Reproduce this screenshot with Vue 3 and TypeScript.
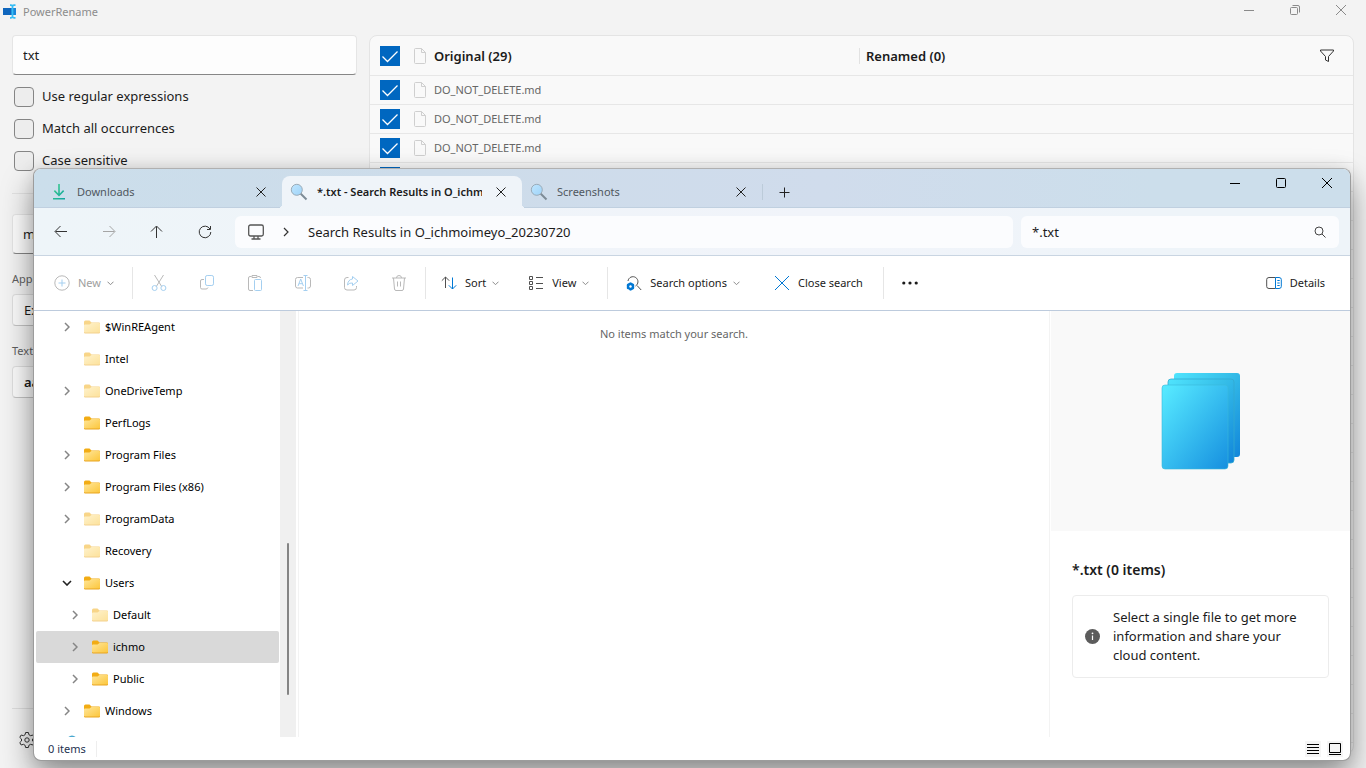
<script setup lang="ts">
import { ref } from 'vue'

interface TreeNode {
  name: string
  level: number
  state: 'closed' | 'open' | 'leaf'
  faded?: boolean
  selected?: boolean
}

const pattern = ref('txt')
const replacement = ref('md')
const query = ref('*.txt')

const options = [
  { id: 'opt-regex', label: 'Use regular expressions' },
  { id: 'opt-all', label: 'Match all occurrences' },
  { id: 'opt-case', label: 'Case sensitive' },
]

const files: string[] = Array.from({ length: 23 }, () => 'DO_NOT_DELETE.md')

const tree: TreeNode[] = [
  { name: '$WinREAgent', level: 0, state: 'closed', faded: true },
  { name: 'Intel', level: 0, state: 'leaf', faded: true },
  { name: 'OneDriveTemp', level: 0, state: 'closed', faded: true },
  { name: 'PerfLogs', level: 0, state: 'leaf' },
  { name: 'Program Files', level: 0, state: 'closed' },
  { name: 'Program Files (x86)', level: 0, state: 'closed' },
  { name: 'ProgramData', level: 0, state: 'closed', faded: true },
  { name: 'Recovery', level: 0, state: 'leaf', faded: true },
  { name: 'Users', level: 0, state: 'open' },
  { name: 'Default', level: 1, state: 'closed', faded: true },
  { name: 'ichmo', level: 1, state: 'closed', selected: true },
  { name: 'Public', level: 1, state: 'closed' },
  { name: 'Windows', level: 0, state: 'closed' },
]
</script>

<template>
  <div class="desktop">
    <svg class="defs" width="0" height="0" aria-hidden="true">
      <defs>
        <linearGradient id="g-folder" x1="0" y1="0" x2="1" y2="1">
          <stop offset="0" stop-color="#ffe69a" /><stop offset="1" stop-color="#fcc63a" />
        </linearGradient>
        <linearGradient id="g-lens" x1="0" y1="0" x2="1" y2="1">
          <stop offset="0" stop-color="#bfe6ff" /><stop offset="1" stop-color="#9fd3f8" />
        </linearGradient>
        <linearGradient id="g-down" x1="0" y1="0" x2="1" y2="1">
          <stop offset="0" stop-color="#3fd08a" /><stop offset="1" stop-color="#0fa3a0" />
        </linearGradient>
        <linearGradient id="g-page" x1="0" y1="0" x2="1" y2="1">
          <stop offset="0.05" stop-color="#55e8ff" /><stop offset="1" stop-color="#168fdf" />
        </linearGradient>
        <linearGradient id="g-back" x1="0" y1="0" x2="1" y2="1">
          <stop offset="0" stop-color="#50e4fd" /><stop offset="0.45" stop-color="#35bde8" /><stop offset="1" stop-color="#1186da" />
        </linearGradient>
      </defs>
    </svg>

    <main class="rename">
      <header class="r-title">
        <svg width="14" height="16" viewBox="0 0 14 16"><path d="M0 4h13v7H0z" fill="#1a86d8" /><path d="M0 4h8v7H0z" fill="#0f66bd" /><path d="M7 1.200h1q1.500 0 1.500 1.500v9.600q0 1.500-1.500 1.500H7M12.500 1.200h-1.500q-1.500 0-1.500 1.500M12.500 13.800h-1.500q-1.500 0-1.500-1.500" fill="none" stroke="#35bdf5" stroke-width="1.700" /></svg>
        <span>PowerRename</span>
        <div class="r-controls">
          <button aria-label="Minimize"><svg width="12" height="12" viewBox="0 0 12 12"><path d="M1 6.500h10" /></svg></button>
          <button aria-label="Restore"><svg width="12" height="12" viewBox="0 0 12 12"><rect x="1.500" y="3.500" width="7" height="7" rx="1" /><path d="M3.500 1.500H9A1.500 1.500 0 0 1 10.500 3v5.500" /></svg></button>
          <button aria-label="Close"><svg width="12" height="12" viewBox="0 0 12 12"><path d="M1 1l10 10M11 1L1 11" /></svg></button>
        </div>
      </header>

      <div class="r-body">
        <section class="side">
          <input v-model="pattern" class="field" type="text" aria-label="Search for" />
          <div class="checks">
            <label v-for="o in options" :key="o.id" :for="o.id"><input :id="o.id" type="checkbox" class="box" />{{ o.label }}</label>
          </div>
          <hr />
          <input v-model="replacement" class="field second" type="text" aria-label="Replace with" />
          <label class="caption" for="apply">Apply to</label>
          <select id="apply" class="pick"><option>Extension only</option></select>
          <span class="caption">Text formatting</span>
          <button class="pick format">aa</button>
          <div class="side-foot">
            <button aria-label="Settings"><svg width="18" height="18" viewBox="0 0 18 18"><circle cx="9" cy="9" r="2.200" /><path d="M7.600 1.500h2.800l.5 2.200 1.700 1 2.200-.7 1.400 2.400-1.700 1.600v2l1.700 1.600-1.400 2.400-2.200-.7-1.700 1-.5 2.200H7.600l-.5-2.200-1.700-1-2.200.7-1.400-2.400L3.500 10V8L1.800 6.400 3.200 4l2.200.7 1.700-1z" stroke-linejoin="round" /></svg></button>
          </div>
        </section>

        <section class="list">
          <table>
            <colgroup><col class="c-check" /><col class="c-icon" /><col class="c-orig" /><col /><col class="c-filter" /></colgroup>
            <thead>
              <tr>
                <th><input type="checkbox" class="tick" checked aria-label="Select all" /></th>
                <th><svg class="doc" width="12" height="16" viewBox="0 0 12 16"><path d="M.5 1.500q0-1 1-1h6l4 4v10q0 1-1 1h-9q-1 0-1-1zM7.500.5v4h4" /></svg></th>
                <th>Original (29)</th>
                <th><span class="split">Renamed (0)</span></th>
                <th><button aria-label="Filter"><svg width="16" height="16" viewBox="0 0 16 16"><path d="M1.500 2h13v1L9.500 8.500v5l-3-1.500V8.500L1.500 3z" stroke-linejoin="round" /></svg></button></th>
              </tr>
            </thead>
            <tbody>
              <tr v-for="(f, i) in files" :key="i">
                <td><input type="checkbox" class="tick" checked :aria-label="f" /></td>
                <td><svg class="doc" width="12" height="16" viewBox="0 0 12 16"><path d="M.5 1.500q0-1 1-1h6l4 4v10q0 1-1 1h-9q-1 0-1-1zM7.500.5v4h4" /></svg></td>
                <td>{{ f }}</td>
                <td></td>
                <td></td>
              </tr>
            </tbody>
          </table>
        </section>
      </div>
    </main>

    <section class="explorer">
      <header class="tabs">
        <div class="tab">
          <svg width="16" height="18" viewBox="0 0 16 18"><path d="M7.200 1h1.600v9.400l3.300-3.300 1.100 1.100L8 13.400 2.800 8.200l1.100-1.100 3.300 3.300zM2 15h12v1.600H2z" fill="url(#g-down)" /></svg>
          <span class="t-name">Downloads</span>
          <button aria-label="Close tab"><svg width="10" height="10" viewBox="0 0 10 10"><path d="M.5.5l9 9M9.500.5l-9 9" /></svg></button>
        </div>
        <div class="tab active">
          <svg width="18" height="18" viewBox="0 0 18 18"><path d="M10.500 10.500l6 6" stroke="#7d8b96" stroke-width="2" /><circle cx="6.800" cy="6.800" r="5.500" fill="url(#g-lens)" stroke="#9aabb8" /></svg>
          <span class="t-name">*.txt - Search Results in O_ichmoimeyo</span>
          <button aria-label="Close tab"><svg width="10" height="10" viewBox="0 0 10 10"><path d="M.5.5l9 9M9.500.5l-9 9" /></svg></button>
        </div>
        <div class="tab">
          <svg width="18" height="18" viewBox="0 0 18 18"><path d="M10.500 10.500l6 6" stroke="#7d8b96" stroke-width="2" /><circle cx="6.800" cy="6.800" r="5.500" fill="url(#g-lens)" stroke="#9aabb8" /></svg>
          <span class="t-name">Screenshots</span>
          <button aria-label="Close tab"><svg width="10" height="10" viewBox="0 0 10 10"><path d="M.5.5l9 9M9.500.5l-9 9" /></svg></button>
        </div>
        <button class="plus" aria-label="New tab"><svg width="11" height="11" viewBox="0 0 11 11"><path d="M5.500.5v10M.5 5.500h10" /></svg></button>
        <div class="w-controls">
          <button aria-label="Minimize"><svg width="12" height="12" viewBox="0 0 12 12"><path d="M1 6.500h10" /></svg></button>
          <button aria-label="Maximize"><svg width="12" height="12" viewBox="0 0 12 12"><rect x="1.500" y="1.500" width="9" height="9" rx="1" /></svg></button>
          <button aria-label="Close"><svg width="12" height="12" viewBox="0 0 12 12"><path d="M1 1l10 10M11 1L1 11" /></svg></button>
        </div>
      </header>

      <nav class="nav">
        <button aria-label="Back"><svg width="14" height="14" viewBox="0 0 14 14"><path d="M13 6.500H1.500M6.500 1L1 6.500 6.500 12" /></svg></button>
        <button class="off" aria-label="Forward"><svg width="14" height="14" viewBox="0 0 14 14"><path d="M1 6.500h11.500M7.500 1L13 6.500 7.500 12" /></svg></button>
        <button aria-label="Up"><svg width="14" height="14" viewBox="0 0 14 14"><path d="M6.500 13V1.500M1 6.500L6.500 1 12 6.500" /></svg></button>
        <button aria-label="Refresh"><svg width="14" height="14" viewBox="0 0 14 14"><path d="M12 4A5.800 5.800 0 1 0 12.800 7M12.500 1v3.500H9" /></svg></button>
        <div class="address">
          <svg width="16" height="16" viewBox="0 0 16 16" class="pc"><rect x=".7" y="1" width="14.600" height="11" rx="1.800" /><path d="M6 12v2.500M10 12v2.500M3.500 15h9" /></svg>
          <svg width="6" height="10" viewBox="0 0 6 10" class="sep-chev"><path d="M1 1l4 4-4 4" /></svg>
          <span>Search Results in O_ichmoimeyo_20230720</span>
        </div>
        <div class="search">
          <input v-model="query" type="text" aria-label="Search" />
          <svg width="12" height="12" viewBox="0 0 12 12"><circle cx="5" cy="5" r="4" /><path d="M8 8l3.500 3.500" /></svg>
        </div>
      </nav>

      <div class="tools">
        <button class="cmd new off"><svg width="16" height="16" viewBox="0 0 16 16"><circle cx="8" cy="8" r="7.200" class="k" /><path d="M8 4.500v7M4.500 8h7" class="b" /></svg><span>New</span><svg class="chev" width="7" height="5" viewBox="0 0 7 5"><path d="M.5.7l3 3 3-3" /></svg></button>
        <i class="bar"></i>
        <button class="ico off" aria-label="Cut"><svg width="16" height="18" viewBox="0 0 16 18"><path d="M3.500 1l7.200 11.500M12.500 1L5.300 12.500" class="k" /><circle cx="3.600" cy="14" r="2.500" class="b" /><circle cx="12.400" cy="14" r="2.500" class="b" /></svg></button>
        <button class="ico off" aria-label="Copy"><svg width="16" height="18" viewBox="0 0 16 18"><path d="M5 5.500H3q-1.500 0-1.500 1.500v6.500Q1.500 15 3 15h4q1.500 0 2-1.500" class="k" /><rect x="6.500" y="1.500" width="8" height="10" rx="1.700" class="b" /></svg></button>
        <button class="ico off" aria-label="Paste"><svg width="16" height="18" viewBox="0 0 16 18"><path d="M4.500 2.500H3Q1.500 2.500 1.500 4V15q0 1.500 1.500 1.500h3M10.500 2.500H12q1.500 0 1.500 1.500M5 1.500h5v2H5z" class="k" /><rect x="7.500" y="5.500" width="7" height="11" rx="1" class="b" /></svg></button>
        <button class="ico off" aria-label="Rename"><svg width="18" height="18" viewBox="0 0 18 18"><path d="M9 3.500H3.500Q1.500 3.500 1.500 5.500v6.500q0 2 2 2H9M13.500 3.500h1q2 0 2 2v6.500q0 2-2 2h-1" class="k" /><path d="M4 12l2.700-7 2.700 7M5 9.700h3.500M9.500 1.500h4M9.500 16.500h4M11.500 1.500v15" class="b" /></svg></button>
        <button class="ico off" aria-label="Share"><svg width="16" height="18" viewBox="0 0 16 18"><path d="M5.500 3.500H4Q1.500 3.500 1.500 6v7.500Q1.500 16 4 16h7q2.500 0 2.500-2.500V12" class="k" /><path d="M9.500 2.500l5.500 4.500-5.500 4.500V9Q6.500 8.500 4.500 11q.5-5.500 5-6z" class="b" stroke-linejoin="round" /></svg></button>
        <button class="ico off" aria-label="Delete"><svg width="16" height="18" viewBox="0 0 16 18"><path d="M1 4h14M5.500 4q0-2.500 2.500-2.500T10.500 4M2.500 4l1 11q.2 1.500 1.500 1.500h6q1.300 0 1.500-1.500l1-11M6.500 7.500v5M9.500 7.500v5" class="k" /></svg></button>
        <i class="bar"></i>
        <button class="cmd"><svg width="16" height="16" viewBox="0 0 16 16"><path d="M4.500 13V2M.8 5.700L4.500 2l3.700 3.700" class="k" /><path d="M11.500 2.500V14M7.800 10.300l3.700 3.700 3.700-3.700" class="b" /></svg><span>Sort</span><svg class="chev" width="7" height="5" viewBox="0 0 7 5"><path d="M.5.7l3 3 3-3" /></svg></button>
        <button class="cmd"><svg width="16" height="16" viewBox="0 0 16 16"><path d="M1.500 1.500h3v3h-3zM1.500 6.500h3v3h-3zM1.500 11.500h3v3h-3zM8 2.500h7M8 8.500h7M8 13.500h7" class="k" /></svg><span>View</span><svg class="chev" width="7" height="5" viewBox="0 0 7 5"><path d="M.5.7l3 3 3-3" /></svg></button>
        <i class="bar"></i>
        <button class="cmd wide"><svg width="16" height="16" viewBox="0 0 16 16"><path d="M2 6a5 5 0 1 1 7.500 5M11 10.500l4.200 4.500" class="k" /><circle cx="4.500" cy="11.500" r="2.500" fill="none" stroke="#0078d4" stroke-width="2.400" /><path d="M4.500 7.500v8M1 9.500l7 4M8 9.500l-7 4" stroke="#0078d4" stroke-width="1.800" /><circle cx="4.500" cy="11.500" r="1.200" fill="#fff" stroke="none" /></svg><span>Search options</span><svg class="chev" width="7" height="5" viewBox="0 0 7 5"><path d="M.5.7l3 3 3-3" /></svg></button>
        <button class="cmd wide"><svg width="16" height="16" viewBox="0 0 16 16"><path d="M1 1l14 14M15 1L1 15" class="b" /></svg><span>Close search</span></button>
        <i class="bar"></i>
        <button class="ico" aria-label="More"><svg width="16" height="4" viewBox="0 0 16 4"><g fill="#1b1b1b" stroke="none"><circle cx="1.800" cy="2" r="1.600" /><circle cx="8" cy="2" r="1.600" /><circle cx="14.200" cy="2" r="1.600" /></g></svg></button>
        <button class="cmd details-btn"><svg width="16" height="14" viewBox="0 0 16 14"><path d="M9.500 1.500H3Q.7 1.500.7 3.500v7Q.7 12.500 3 12.500h6.500" class="k" /><path d="M9.500 1.500H13q2.300 0 2.300 2v7q0 2-2.300 2H9.500zM11.300 4.500h2.400M11.300 7h2.400M11.300 9.500h2.400" class="b" /></svg><span>Details</span></button>
      </div>

      <div class="work">
        <div class="tree">
          <button v-for="n in tree" :key="n.name" class="node" :class="{ child: n.level === 1, selected: n.selected }">
            <span class="arrow">
              <svg v-if="n.state === 'closed'" width="6" height="10" viewBox="0 0 6 10"><path d="M1 1l4 4-4 4" stroke="#858585" stroke-width="1.500" /></svg>
              <svg v-else-if="n.state === 'open'" width="10" height="6" viewBox="0 0 10 6"><path d="M1 1l4 4 4-4" stroke="#222" stroke-width="1.600" /></svg>
            </span>
            <svg class="folder" :class="{ faded: n.faded }" width="16" height="14" viewBox="0 0 16 14"><path d="M0 2Q0 .5 1.500.5h4L7.500 2.500H15q1 0 1 1V8H0z" fill="#f2ac14" /><path d="M0 5.500q0-1 1-1h4.500l2-1.500H15q1 0 1 1v8q0 1-1 1H1q-1 0-1-1z" fill="url(#g-folder)" /><path d="M0 12q0 1 1 1h14q1 0 1-1" fill="none" stroke="#e9a521" /></svg>
            <span>{{ n.name }}</span>
          </button>
          <div class="node peek"><svg width="14" height="16" viewBox="0 0 14 16"><ellipse cx="7" cy="8" rx="6" ry="7.500" fill="#4aa8d0" /></svg></div>
        </div>
        <div class="scroll"><div class="thumb"></div></div>
        <div class="results">No items match your search.</div>
        <aside class="details">
          <div class="preview">
            <svg width="80" height="98" viewBox="0 0 80 98">
              <rect x="13" y="1" width="66" height="84" rx="3" fill="url(#g-back)" />
              <rect x="7" y="7" width="66" height="84" rx="3" fill="url(#g-back)" stroke="#32a9d1" stroke-width=".8" />
              <rect x="1" y="13" width="66" height="84" rx="3" fill="url(#g-page)" stroke="#3bbada" stroke-width=".6" />
            </svg>
          </div>
          <h2>*.txt (0 items)</h2>
          <div class="tip">
            <svg width="15" height="15" viewBox="0 0 15 15"><circle cx="7.500" cy="7.500" r="7.500" fill="#5c5c5c" /><path d="M7.500 6.500v4.500" stroke="#fff" stroke-width="1.200" /><circle cx="7.500" cy="4.300" r=".9" fill="#fff" /></svg>
            <p>Select a single file to get more information and share your cloud content.</p>
          </div>
        </aside>
      </div>

      <footer class="status">
        <span class="count">0 items</span>
        <button aria-label="Details view"><svg width="12" height="12" viewBox="0 0 12 12"><path d="M0 1.500h12M0 4.500h12M0 7.500h12M0 10.500h12" /></svg></button>
        <button aria-label="Large icons view"><svg width="12" height="12" viewBox="0 0 12 12"><path d="M.5.5h11v9H.5zM0 11.500h12" /></svg></button>
      </footer>
    </section>
  </div>
</template>

<style>
html, body { margin: 0; overflow: hidden; }
</style>

<style scoped>
* { box-sizing: border-box; }
.desktop {
  position: relative;
  height: 100vh;
  overflow: hidden;
  background: #f3f3f3;
  color: #1b1b1b;
  font: 11px/16px "Noto Sans", "Open Sans", sans-serif;
}
.defs { position: absolute; }
button {
  display: flex;
  align-items: center;
  justify-content: center;
  padding: 0;
  border: 0;
  background: none;
  color: inherit;
  font: inherit;
}
svg { display: block; flex: none; fill: none; stroke-width: 1; }
button svg { stroke: #333; }

/* rename window */
.rename { display: flex; flex-direction: column; height: 100%; }
.r-title { display: flex; align-items: center; height: 35px; padding: 0 2px 11px 3px; gap: 6px; color: #8c8c8c; }
.r-controls { display: flex; margin-left: auto; margin-bottom: 4px; }
.r-controls button { width: 46px; height: 20px; }
.r-controls svg { stroke: #8a8a8a; }
.r-body { display: flex; flex: 1; min-height: 0; gap: 12px; padding: 0 12px 14px; }
.side { display: flex; flex-direction: column; width: 345px; }
.field {
  height: 40px;
  padding: 0 10px;
  border: 1px solid #e5e5e5;
  border-bottom-color: #868686;
  border-radius: 4px;
  background: #fdfdfd;
  color: inherit;
  font: inherit;
  font-size: 13px;
}
.checks { display: flex; flex-direction: column; padding: 5px 2px 17px; }
.checks label { display: flex; align-items: center; height: 32px; gap: 8px; font-size: 13px; }
.box { appearance: none; width: 20px; height: 20px; margin: 2px 0 0; border: 1px solid #858585; border-radius: 4px; background: #ededed; }
hr { width: 100%; height: 1px; margin: 0 0 20px; border: 0; background: #e2e2e2; }
.caption { margin: 17px 0 7px; color: #5f5f5f; }
.pick {
  appearance: none;
  height: 32px;
  padding: 0 11px;
  border: 1px solid #dedede;
  border-bottom-color: #c4c4c4;
  border-radius: 4px;
  background: #fbfbfb;
  color: inherit;
  font: inherit;
  font-size: 13px;
  justify-content: flex-start;
}
.format { font-weight: 600; }
.side-foot { margin-top: auto; padding: 22px 6px 5px; border-top: 1px solid #dedede; }
.list { flex: 1; min-width: 0; overflow: hidden; border: 1px solid #e4e4e4; border-radius: 8px; background: #f9f9f9; }
table { width: 100%; border-collapse: collapse; table-layout: fixed; }
.c-check { width: 44px; }
.c-icon { width: 20px; }
.c-orig { width: 425px; }
.c-filter { width: 50px; }
th, td { height: 29px; padding: 0; border-bottom: 1px solid #e7e7e7; color: #666; text-align: left; }
th { height: 39px; padding-top: 2px; color: #1b1b1b; font-size: 13px; font-weight: 600; }
th:first-child, td:first-child { padding-left: 10px; }
.split { display: block; padding-left: 6px; border-left: 1px solid #e2e2e2; }
.doc { stroke: #cfcfcf; }
th button { width: 16px; margin-left: 16px; }
.tick {
  display: block;
  appearance: none;
  width: 20px;
  height: 20px;
  margin: 0;
  background: #0067c0 url("data:image/svg+xml,%3Csvg xmlns='http://www.w3.org/2000/svg' viewBox='0 0 20 20'%3E%3Cpath d='M2.500 10.500l5 5 10-10' fill='none' stroke='white' stroke-width='1.300'/%3E%3C/svg%3E");
}

/* explorer window */
.explorer {
  position: absolute;
  inset: 168px 15px 7px 33px;
  display: flex;
  flex-direction: column;
  overflow: hidden;
  border: 1px solid #9c9c9c;
  border-top-color: #b0b0b0;
  border-radius: 8px;
  background: #fff;
  background-clip: padding-box;
  box-shadow: 0 16px 32px rgba(0, 0, 0, 0.4), 0 0 16px rgba(0, 0, 0, 0.1);
}
.tabs {
  display: flex;
  align-items: flex-end;
  height: 39px;
  background: linear-gradient(90deg, #cbdeeb 0%, #cddcea 30%, #d0dcec 60%, #ccdeeb 85%);
  box-shadow: inset 0 -1px #c0d0e0;
}
.tab { position: relative; display: flex; align-items: center; width: 240px; height: 32px; padding: 0 11px 0 8px; gap: 9px; color: #50585f; }
.tab:first-child { width: 248px; padding-left: 17px; gap: 10px; }
.t-name { flex: 1; overflow: hidden; white-space: nowrap; }
.tab > button { width: 20px; height: 20px; }
.tab > button svg, .plus svg { stroke: #222; }
.active { border-radius: 8px 8px 0 0; background: #eff4f9; color: #1b1b1b; font-weight: 600; }
.active::before, .active::after { content: ""; position: absolute; bottom: 0; width: 4px; height: 4px; }
.active::before { right: 100%; background: radial-gradient(circle at 0 0, transparent 4px, #eff4f9 4px); }
.active::after { left: 100%; background: radial-gradient(circle at 100% 0, transparent 4px, #eff4f9 4px); }
.plus { position: relative; width: 44px; height: 32px; }
.plus::before { content: ""; position: absolute; left: 0; top: 8px; height: 16px; border-left: 1px solid #bccbd9; }
.w-controls { display: flex; align-self: flex-start; margin-left: auto; }
.w-controls button { width: 46px; height: 28px; }
.w-controls svg { stroke: #000; }
.nav {
  display: flex;
  align-items: center;
  height: 48px;
  padding: 0 11px 0 3px;
  border-bottom: 1px solid #c9d5e2;
  background: linear-gradient(90deg, #eef5f9 0%, #eff4f9 30%, #f1f4fa 60%, #eef4f9 85%);
}
.nav > button { width: 48px; height: 32px; }
.off svg { stroke: #a5a5a5; }
.address, .search { display: flex; align-items: center; height: 32px; border-radius: 6px; background: #fbfcfe; font-size: 13px; }
.address { flex: 765; margin: 0 8px 0 6px; padding-left: 13px; }
.pc { stroke: #555; stroke-width: 1.300; }
.sep-chev { margin: 0 19px; stroke: #333; stroke-width: 1.200; }
.search { flex: 294; padding: 0 13px 0 11px; }
.search input { flex: 1; min-width: 0; padding: 0; border: 0; outline: 0; background: none; color: inherit; font: inherit; }
.search svg { stroke: #444; }
.tools { display: flex; align-items: center; height: 55px; padding: 0 14px 0 9px; border-bottom: 1px solid #bdcbdd; }
.bar { width: 1px; height: 32px; margin: 0 2px; background: #e6e6e6; }
.cmd { height: 32px; padding: 0 16px 0 13px; gap: 8px; }
.new { justify-content: flex-start; width: 87px; padding: 0 11px; color: #a0a0a0; }
.cmd .chev { margin-left: -2px; stroke: #8c8c8c; }
.k { stroke: #505050; }
.b { stroke: #0078d4; }
.off .k { stroke: #b9b9b9; }
.off .b { stroke: #a4cff0; }
.ico { width: 48px; height: 32px; }
.wide { padding: 0 18px 0 16px; }
.details-btn { margin-left: auto; padding: 0 11px; }
.work { display: flex; flex: 1; min-height: 0; }
.tree { width: 246px; overflow: hidden; }
.node { justify-content: flex-start; width: 243px; height: 32px; margin-left: 2px; padding-left: 20px; gap: 5px; border-radius: 2px; color: #000; }
.child { padding-left: 28px; }
.selected { background: #d9d9d9; }
.arrow { display: flex; justify-content: center; width: 21px; margin-right: 2px; }
.node .folder { stroke: none; }
.faded { opacity: 0.5; }
.peek { display: flex; align-items: center; padding-left: 29px; }
.scroll { width: 16px; padding-top: 232px; background: #f0f0f0; }
.thumb { width: 2px; height: 152px; margin-left: 7px; border-radius: 1px; background: #858585; }
.results { flex: 1; min-width: 0; margin-left: 2px; padding-top: 15px; border-left: 1px solid #f3f3f3; color: #666; text-align: center; }
.details { width: 301px; padding-left: 1px; border-left: 1px solid #f3f3f3; }
.preview { display: flex; align-items: center; justify-content: center; height: 220px; background: #f9f9f9; }
h2 { margin: 29px 21px 15px; font-size: 14px; line-height: 20px; font-weight: 600; }
.tip { display: flex; align-items: center; gap: 13px; margin: 0 21px; padding: 12px; border: 1px solid #ececec; border-radius: 4px; }
.tip p { margin: 0; font-size: 13px; line-height: 19px; }
.status { display: flex; align-items: center; height: 23px; padding: 0 7px 0 14px; gap: 6px; color: #1e3250; }
.count { margin-right: auto; padding-right: 10px; border-right: 1px solid #eee; }
.status button { width: 16px; height: 16px; background: #f5f5f5; }
.status svg { stroke: #000; }
</style>
